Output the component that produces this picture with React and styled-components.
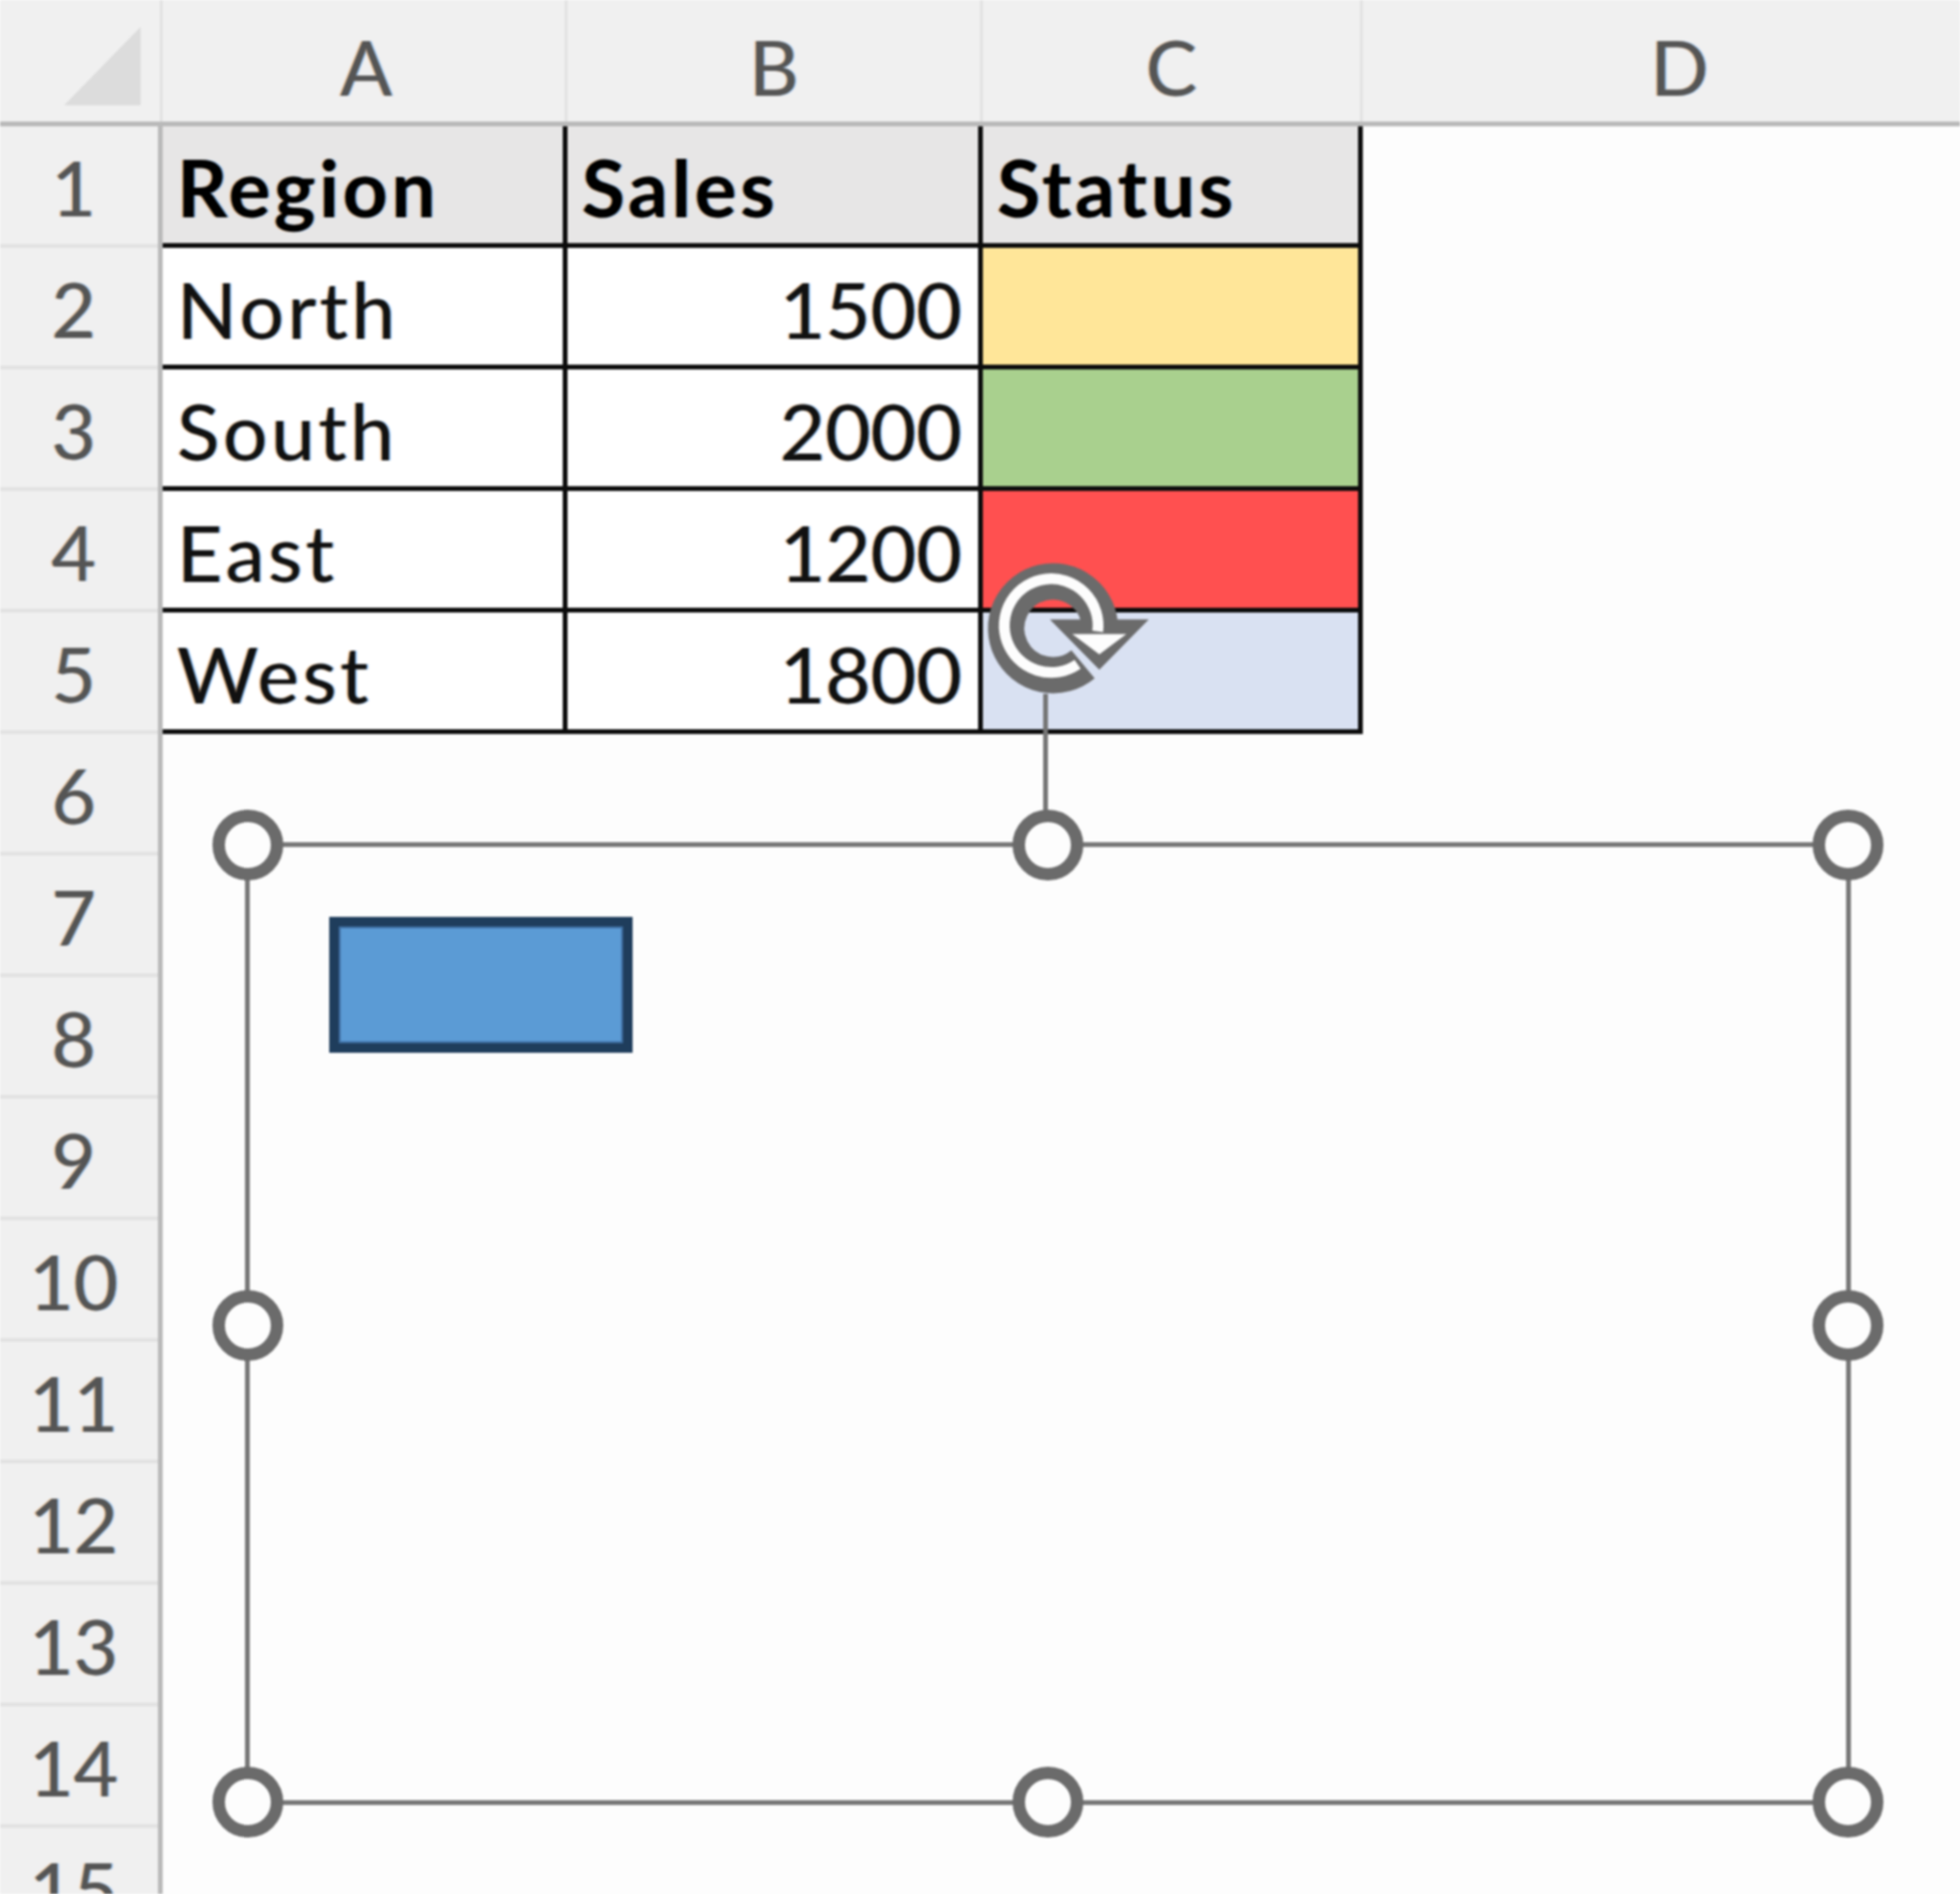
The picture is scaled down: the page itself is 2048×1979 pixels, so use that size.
import React from 'react';
import styled, { createGlobalStyle } from 'styled-components';

const GlobalStyle = createGlobalStyle`
  html, body {
    margin: 0;
    padding: 0;
    background: #fdfdfd;
    overflow: hidden;
  }
`;

const Sheet = styled.div`
  width: 2048px;
  height: 1979px;
  overflow: hidden;
  background: #fdfdfd;
  font-family: Lato, "Liberation Sans", sans-serif;
  font-size: 80px;
  filter: blur(0.9px);
`;

const ColumnBar = styled.div`
  display: flex;
  height: 132px;
  box-sizing: border-box;
  background: #f0f0f0;
  border-bottom: 5px solid #b9b9b9;
`;

const Corner = styled.div`
  width: 170px;
  flex: none;
  box-sizing: border-box;
  padding: 28px 20px 0 0;
  display: flex;
  justify-content: flex-end;
  align-items: flex-start;
  border-right: 3px solid #e2e2e2;
`;

const CornerMark = styled.div`
  width: 80px;
  height: 82px;
  background: #dcdcdc;
  clip-path: polygon(100% 0, 100% 100%, 0 100%);
`;

const ColumnHead = styled.div`
  width: ${(p) => p.$w}px;
  flex: none;
  box-sizing: border-box;
  display: flex;
  align-items: center;
  justify-content: center;
  padding-top: 11px;
  padding-left: ${(p) => p.$nudge || 0}px;
  color: #555;
  border-right: 3px solid #e2e2e2;
  text-shadow: -1.5px 0 1px rgba(225, 140, 50, 0.55), 1.5px 0 1px rgba(50, 140, 235, 0.55);
`;

const Body = styled.div`
  display: flex;
`;

const RowHeads = styled.div`
  width: 170px;
  flex: none;
  box-sizing: border-box;
  background: #f0f0f0;
  border-right: 5px solid #b9b9b9;
`;

const RowHead = styled.div`
  height: 127px;
  box-sizing: border-box;
  display: flex;
  align-items: center;
  justify-content: center;
  padding: 3px 11px 0 0;
  color: #555;
  border-bottom: 4px solid #e2e2e2;
  text-shadow: -1.5px 0 1px rgba(225, 140, 50, 0.55), 1.5px 0 1px rgba(50, 140, 235, 0.55);
`;

const Canvas = styled.div`
  position: relative;
  flex: 1;
  height: 1847px;
`;

const DataTable = styled.div`
  display: grid;
  grid-template-columns: 423px 434px 397px;
  grid-auto-rows: 127px;
  width: 1254px;
`;

const Cell = styled.div`
  box-sizing: border-box;
  display: flex;
  align-items: center;
  justify-content: ${(p) => (p.$right ? 'flex-end' : 'flex-start')};
  padding: 3px 17px 0 15px;
  background: ${(p) => p.$fill || '#fff'};
  color: ${(p) => (p.$head ? '#000' : '#111')};
  font-size: 82px;
  letter-spacing: ${(p) => (p.$right ? 0 : 3.8)}px;
  font-weight: ${(p) => (p.$head ? 700 : 400)};
  border-right: 5px solid #0c0c0c;
  border-bottom: 5px solid #0c0c0c;
  text-shadow: -1.5px 0 1px rgba(225, 130, 30, 0.6), 1.5px 0 1px rgba(30, 130, 235, 0.6);
`;

const Stem = styled.div`
  position: absolute;
  left: 920px;
  top: 593px;
  width: 5px;
  height: 124px;
  background: #757575;
`;

const RotateIcon = styled.svg`
  position: absolute;
  left: 857px;
  top: 451px;
  width: 180px;
  height: 147px;
`;

const Frame = styled.div`
  position: absolute;
  left: 88.6px;
  top: 751px;
  width: 1672px;
  height: 1000px;
  outline: 5px solid #777;
  outline-offset: -2.5px;
`;

const Handle = styled.div`
  position: absolute;
  left: ${(p) => p.$x}%;
  top: ${(p) => p.$y}%;
  width: 74px;
  height: 74px;
  box-sizing: border-box;
  margin: -37px 0 0 -37px;
  border-radius: 50%;
  border: 13px solid #6b6b6b;
  background: #fdfdfd;
`;

const BlueShape = styled.div`
  position: absolute;
  left: 85.4px;
  top: 75px;
  width: 317px;
  height: 142px;
  box-sizing: border-box;
  background: #5b9bd5;
  border: 10px solid #1f3d5c;
  box-shadow: inset 0 0 0 2px #3f6fa3;
`;

const columns = [
  { name: 'A', w: 423, nudge: 5 },
  { name: 'B', w: 434 },
  { name: 'C', w: 397 },
  { name: 'D', w: 665 },
];

const rows = [
  { region: 'North', sales: 1500, fill: '#ffe699' },
  { region: 'South', sales: 2000, fill: '#a9d08e' },
  { region: 'East', sales: 1200, fill: '#ff5050' },
  { region: 'West', sales: 1800, fill: '#d9e1f2' },
];

const handles = [
  [0, 0], [50, 0], [100, 0],
  [0, 50.2], [100, 50.2],
  [0, 100], [50, 100], [100, 100],
];

function App() {
  return (
    <Sheet>
      <GlobalStyle />
      <ColumnBar>
        <Corner><CornerMark /></Corner>
        {columns.map((c) => (
          <ColumnHead key={c.name} $w={c.w} $nudge={c.nudge}>{c.name}</ColumnHead>
        ))}
      </ColumnBar>
      <Body>
        <RowHeads>
          {Array.from({ length: 15 }, (_, i) => (
            <RowHead key={i}>{i + 1}</RowHead>
          ))}
        </RowHeads>
        <Canvas>
          <DataTable>
            <Cell $head $fill="#e7e6e6">Region</Cell>
            <Cell $head $fill="#e7e6e6">Sales</Cell>
            <Cell $head $fill="#e7e6e6">Status</Cell>
            {rows.map((r) => (
              <React.Fragment key={r.region}>
                <Cell>{r.region}</Cell>
                <Cell $right>{r.sales}</Cell>
                <Cell $fill={r.fill} />
              </React.Fragment>
            ))}
          </DataTable>
          <Stem />
          <RotateIcon viewBox="230 70 540 440">
            <path d="M544 403 A147 147 0 1 1 597 290" fill="none" stroke="#6b6b6b" strokeWidth="114" />
            <polygon points="440,262 750,262 595,420" fill="#6b6b6b" />
            <path d="M527 403 A147 147 0 1 1 590 300" fill="none" stroke="#fdfdfd" strokeWidth="34" />
            <polygon points="510,308 680,308 595,372" fill="#fdfdfd" />
          </RotateIcon>
          <Frame>
            <BlueShape />
            {handles.map(([x, y]) => (
              <Handle key={`${x}-${y}`} $x={x} $y={y} />
            ))}
          </Frame>
        </Canvas>
      </Body>
    </Sheet>
  );
}

export default App;
